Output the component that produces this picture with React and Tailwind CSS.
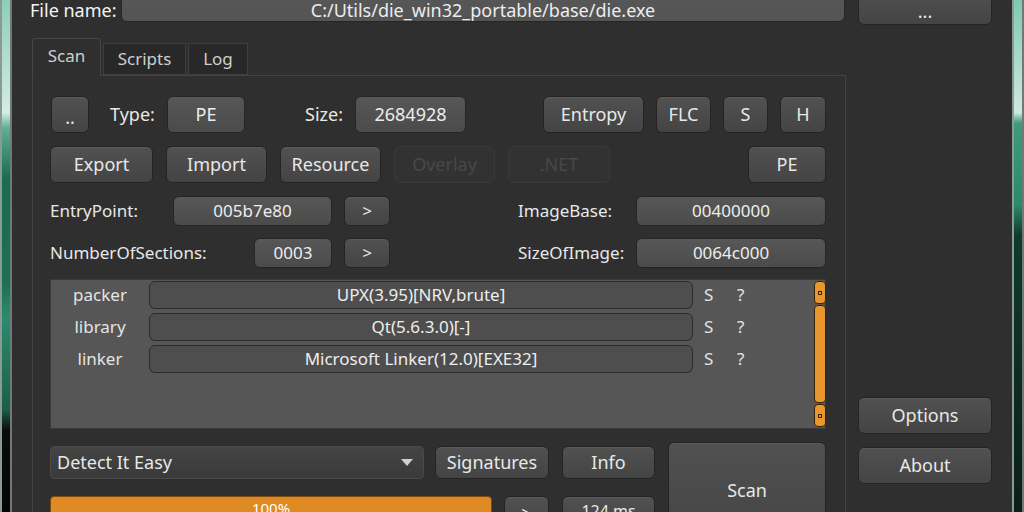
import React from "react";

const font = { fontFamily: '"Noto Sans", "Open Sans", sans-serif' };

const Btn = ({ children, className = "", disabled }) => (
  <div
    className={
      "flex items-center justify-center rounded-[6px] border " +
      (disabled
        ? "border-[#3a3a3a] bg-[#323232] text-[#484848] "
        : "border-[#242424] bg-gradient-to-b from-[#515151] to-[#444444] text-[#e8e8e8] shadow-[inset_0_1px_0_#5a5a5a] ") +
      className
    }
  >
    {children}
  </div>
);

const Field = ({ children, className = "" }) => (
  <div
    className={
      "flex items-center justify-center rounded-[6px] border border-[#262626] bg-gradient-to-b from-[#575757] to-[#4b4b4b] text-[#ededed] " +
      className
    }
  >
    {children}
  </div>
);

const Edge = ({ right }) => (
  <div className="flex h-full w-[12px] shrink-0 bg-[#111]">
    <div className="w-[2px] bg-[#8a9a94]" />
    <div
      className={
        "w-[8px] " +
        (right
          ? "bg-[linear-gradient(to_bottom,#7fc9b2_0%,#cfe9df_22%,#3f9a7e_24%,#2a8a6c_40%,#0f3a2c_46%,#0b1f19_100%)]"
          : "bg-[linear-gradient(to_bottom,#8ccdb9_0%,#d6ece3_22%,#5fae95_25%,#1a6b50_35%,#1d6e53_55%,#2c8a6e_62%,#1c5e48_80%,#0a0c0b_84%,#050505_100%)]")
      }
    />
    <div className="w-[2px] bg-[#6f7a76]" />
  </div>
);

const results = [
  ["packer", "UPX(3.95)[NRV,brute]"],
  ["library", "Qt(5.6.3.0)[-]"],
  ["linker", "Microsoft Linker(12.0)[EXE32]"],
];

export default function App() {
  return (
    <div
      className="flex h-[512px] w-[1024px] overflow-hidden bg-[#2f2f2f] text-[18px] text-[#e8e8e8]"
      style={font}
    >
      <Edge />
      <div className="flex min-w-0 flex-1 flex-col pl-[18px]">
        {/* file name row */}
        <div className="mt-[-12px] flex items-start">
          <div className="mt-[12px] w-[91px] leading-[20px] text-[#f4f4f4]">File name:</div>
          <Field className="h-[34px] w-[724px] items-end pb-[1px] leading-[20px] from-[#5c5c5c] to-[#545454]">
            C:/Utils/die_win32_portable/base/die.exe
          </Field>
          <Btn className="ml-[13px] h-[37px] w-[134px] items-end pb-[4px] leading-none">
            ...
          </Btn>
        </div>

        <div className="flex flex-1">
          {/* tab area */}
          <div className="ml-[2px] mt-[13px] flex w-[814px] flex-col">
            <div className="flex items-end">
              <div className="z-10 mb-[-1px] flex h-[38px] w-[69px] items-center justify-center rounded-t-[3px] border border-b-0 border-[#454545] bg-[#2f2f2f] pb-[4px] text-[17px] text-[#cfcfcf]">
                Scan
              </div>
              <div className="ml-[2px] flex h-[32px] w-[83px] items-center justify-center border border-[#3e3e3e] bg-[#282828] text-[17px] text-[#cfcfcf]">
                Scripts
              </div>
              <div className="ml-[2px] flex h-[32px] w-[60px] items-center justify-center border border-[#3e3e3e] bg-[#282828] text-[17px] text-[#cfcfcf]">
                Log
              </div>
            </div>
            <div className="flex flex-1 flex-col border border-[#434343] pl-[17px] pr-[19px] pt-[20px]">
              {/* row 1 */}
              <div className="flex h-[37px]">
                <Btn className="ml-[1px] w-[38px] items-end pb-[6px] leading-none">..</Btn>
                <div className="ml-[21px] flex w-[57px] items-center">Type:</div>
                <Field className="w-[78px]">PE</Field>
                <div className="ml-[60px] flex w-[50px] items-center">Size:</div>
                <Field className="w-[111px]">2684928</Field>
                <Btn className="ml-auto w-[101px]">Entropy</Btn>
                <Btn className="ml-[12px] w-[55px]">FLC</Btn>
                <Btn className="ml-[12px] w-[45px]">S</Btn>
                <Btn className="ml-[12px] w-[46px]">H</Btn>
              </div>
              {/* row 2 */}
              <div className="mt-[13px] flex h-[37px]">
                <Btn className="w-[103px]">Export</Btn>
                <Btn className="ml-[13px] w-[101px]">Import</Btn>
                <Btn className="ml-[13px] w-[101px]">Resource</Btn>
                <Btn disabled className="ml-[13px] w-[101px]">Overlay</Btn>
                <Btn disabled className="ml-[13px] w-[102px]">.NET</Btn>
                <Btn className="ml-auto w-[78px]">PE</Btn>
              </div>
              {/* row 3 */}
              <div className="mt-[13px] flex h-[30px] text-[17px]">
                <div className="flex w-[123px] items-center">EntryPoint:</div>
                <Field className="w-[159px]">005b7e80</Field>
                <Btn className="ml-[12px] w-[46px]">&gt;</Btn>
                <div className="ml-[128px] flex w-[118px] items-center">ImageBase:</div>
                <Field className="flex-1">00400000</Field>
              </div>
              {/* row 4 */}
              <div className="mt-[12px] flex h-[30px] text-[17px]">
                <div className="flex w-[204px] items-center">NumberOfSections:</div>
                <Field className="w-[78px]">0003</Field>
                <Btn className="ml-[12px] w-[46px]">&gt;</Btn>
                <div className="ml-[128px] flex w-[118px] items-center">SizeOfImage:</div>
                <Field className="flex-1">0064c000</Field>
              </div>
              {/* results */}
              <div className="mt-[11px] flex h-[150px] border border-[#3a3a3a] bg-[#565656] text-[17px]">
                <div className="flex flex-1 flex-col gap-[4px] pt-[1px]">
                  {results.map(([k, v]) => (
                    <div key={k} className="flex h-[28px] items-center">
                      <div className="w-[98px] text-center text-[#e4e4e4]">{k}</div>
                      <div className="flex h-[28px] w-[544px] items-center justify-center rounded-[6px] border border-[#2a2a2a] bg-[#4e4e4e] text-[#ededed]">
                        {v}
                      </div>
                      <div className="ml-[11px] w-[20px] text-[#e4e4e4]">S</div>
                      <div className="ml-[13px] text-[#e4e4e4]">?</div>
                    </div>
                  ))}
                </div>
                <div className="mr-[-1px] flex w-[12px] flex-col gap-[1px] py-[1px]">
                  <div className="flex h-[23px] items-center justify-center rounded-[4px] border border-[#3a2408] bg-[#e8962e]">
                    <div className="h-[4px] w-[4px] border border-[#3a2408]" />
                  </div>
                  <div className="flex-1 rounded-[4px] border border-[#3a2408] bg-[#e8962e]" />
                  <div className="flex h-[23px] items-center justify-center rounded-[4px] border border-[#3a2408] bg-[#e8962e]">
                    <div className="h-[4px] w-[4px] border border-[#3a2408]" />
                  </div>
                </div>
              </div>
              {/* bottom */}
              <div className="mt-[13px] flex">
                <div className="flex flex-col pt-[4px]">
                  <div className="flex h-[33px]">
                    <div className="flex w-[374px] items-center justify-between rounded-[4px] border border-[#4a4a4a] bg-gradient-to-b from-[#444] to-[#3a3a3a] pl-[6px] pr-[10px]">
                      <span>Detect It Easy</span>
                      <svg width="12" height="8" viewBox="0 0 12 8">
                        <path d="M0 0 L12 0 L6 7 Z" fill="#cfcfcf" />
                      </svg>
                    </div>
                    <Btn className="ml-[11px] w-[114px]">Signatures</Btn>
                    <Btn className="ml-[13px] w-[93px]">Info</Btn>
                  </div>
                  <div className="mt-[17px] flex h-[34px]">
                    <div className="flex w-[442px] items-start justify-center rounded-[4px] border border-[#7a4a10] bg-[#df8a22] pt-[2px] text-[15px] leading-[18px] text-[#fff]">
                      100%
                    </div>
                    <Btn className="ml-[12px] w-[45px]">&gt;</Btn>
                    <Btn className="ml-[13px] w-[93px] items-start pt-[2px] text-[16px]">124 ms</Btn>
                  </div>
                </div>
                <Btn className="ml-[13px] h-[100px] w-[158px] pb-[4px]">Scan</Btn>
              </div>
            </div>
          </div>
          {/* right column */}
          <div className="ml-[12px] flex w-[134px] flex-col pt-[372px]">
            <Btn className="h-[37px] shrink-0">Options</Btn>
            <Btn className="mt-[13px] h-[37px] shrink-0">About</Btn>
          </div>
        </div>
      </div>
      <Edge right />
    </div>
  );
}
